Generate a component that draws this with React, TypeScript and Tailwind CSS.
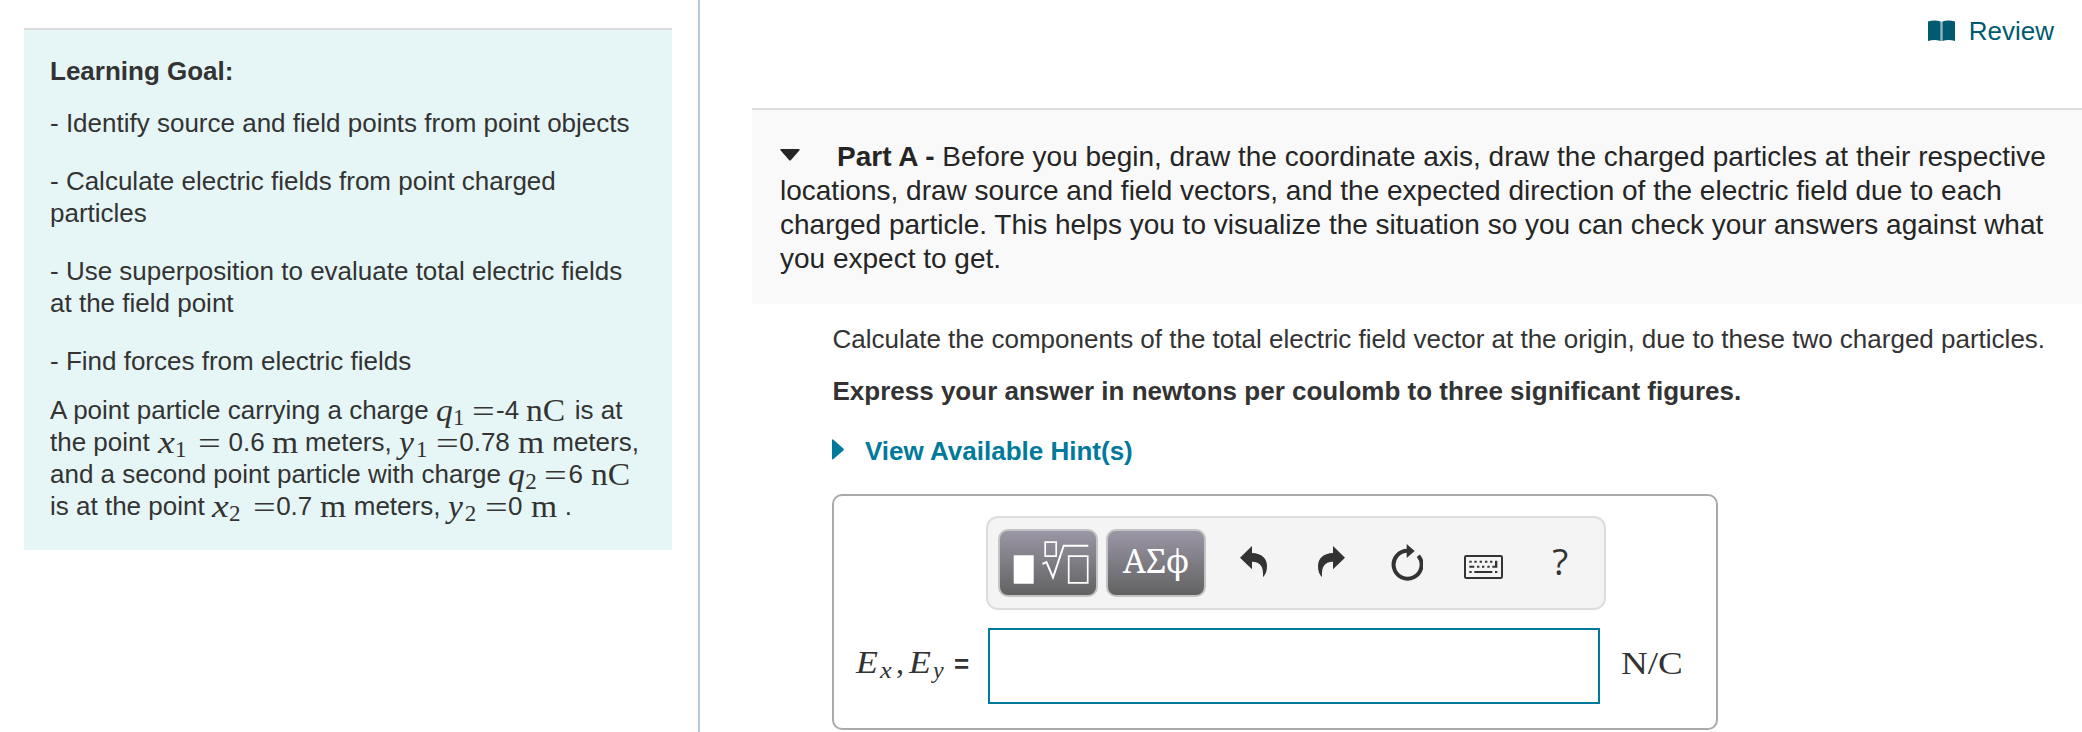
import type { ReactNode } from 'react';
import { clsx } from 'clsx';

const serif = 'font-["Liberation_Serif",serif]';

function Roman({ children, className }: { children: ReactNode; className?: string }) {
  return (
    <span className={clsx('relative top-0.5 inline-block text-[32px] leading-none', serif, className)}>
      <span className="inline-block origin-left scale-x-105">{children}</span>
    </span>
  );
}

function Equals({ className }: { className?: string }) {
  return (
    <span className={clsx('relative top-[3px] inline-block text-[31px] leading-none', serif, className)}>
      <span className="inline-block origin-left scale-x-[1.3]">=</span>
    </span>
  );
}

function Variable({ name, index, className }: { name: string; index: string; className?: string }) {
  return (
    <span className={clsx('inline-flex items-baseline text-[32px] leading-none', serif, className)}>
      <span className="relative top-0.5 w-[17px]">
        <i className={clsx('inline-block origin-left', name === 'x' ? 'scale-x-[1.18]' : 'scale-x-105')}>{name}</i>
      </span>
      <span className="relative top-[6px] text-[23px]">{index}</span>
    </span>
  );
}

function LearningGoal() {
  return (
    <section className="mt-7 ml-6 h-[522px] w-[648px] border-t-2 border-[#ddd] bg-[#e6f6f6] pt-[25px] pl-[26px] text-[26px] leading-8 whitespace-nowrap text-[#333]">
      <h2 className="font-bold">Learning Goal:</h2>
      <p className="mt-5">- Identify source and field points from point objects</p>
      <p className="mt-[26px]">
        - Calculate electric fields from point charged
        <br />
        particles
      </p>
      <p className="mt-[26px]">
        - Use superposition to evaluate total electric fields
        <br />
        at the field point
      </p>
      <p className="mt-[26px]">- Find forces from electric fields</p>
      <div className="mt-[15px]">
        <p className="h-8">
          A point particle carrying a charge <Variable name="q" index="1" className="w-[29px]" />{' '}
          <Equals className="w-[24px]" />
          -4 <Roman className="w-[41px]">nC</Roman> is at
        </p>
        <p className="h-8">
          the point <Variable name="x" index="1" className="ml-px w-[33px]" />{' '}
          <Equals className="w-[23px]" /> 0.6 <Roman className="w-[26px]">m</Roman> meters,{' '}
          <Variable name="y" index="1" className="w-[30px]" /> <Equals className="w-[23px]" />
          0.78 <Roman className="ml-px w-[27px]">m</Roman> meters,
        </p>
        <p className="h-8">
          and a second point particle with charge{' '}
          <Variable name="q" index="2" className="w-[29px]" /> <Equals className="w-[24px]" />
          6 <Roman className="ml-px">nC</Roman>
        </p>
        <p className="h-8">
          is at the point <Variable name="x" index="2" className="w-[34px]" />{' '}
          <Equals className="w-[23px]" />
          0.7 <Roman className="w-[27px]">m</Roman> meters,{' '}
          <Variable name="y" index="2" className="w-[30px]" /> <Equals className="w-[23px]" />
          0 <Roman className="ml-px w-[27px]">m</Roman> .
        </p>
      </div>
    </section>
  );
}

function BookIcon() {
  return (
    <svg width="27" height="22" viewBox="0 0 27 22" fill="#005a70">
      <path d="M0 1.5C4 .2 9 .2 12.5 1.5V21C9 19.6 4 19.6 0 21Z" />
      <path d="M14.5 1.5C18 .2 23 .2 27 1.5V21C23 19.6 18 19.6 14.5 21Z" />
      <path d="M12.5 1.5h2V21h-2z" opacity=".45" />
    </svg>
  );
}

function UndoIcon({ className }: { className?: string }) {
  return (
    <svg width="28" height="32" viewBox="0 0 84 96" fill="#333" className={className}>
      <path d="M0 35 36 0V21C66 22 81 38 81 61C81 75 77 85 69 94C71 62 62 48 36 47V70Z" />
    </svg>
  );
}

function ResetIcon() {
  return (
    <svg width="32" height="37" viewBox="0 0 96 111" fill="none">
      <path d="M52 20A42 42 0 1 0 82 35" stroke="#333" strokeWidth="12" />
      <path d="M47 0 71 21 47 42Z" fill="#333" />
    </svg>
  );
}

function KeyboardIcon() {
  return (
    <svg width="39" height="24" viewBox="0 0 117 72" fill="#333">
      <rect x="3" y="3" width="111" height="66" rx="4" fill="none" stroke="#333" strokeWidth="6" />
      <path d="M16 17h7v6h-7zM31 17h7v6h-7zM47 17h7v6h-7zM63 17h7v6h-7zM78 17h7v6h-7zM93 17h7v21H85v-6h8z" />
      <path d="M16 32h15v6H16zM39 32h7v6h-7zM54 32h7v6h-7zM70 32h7v6h-7z" />
      <path d="M16 48h7v6h-7zM31 48h54v6H31zM93 48h7v6h-7z" />
    </svg>
  );
}

function TemplateIcon() {
  return (
    <svg width="80" height="44" viewBox="0 0 80 44" fill="none" stroke="#fff" className="overflow-visible">
      <path d="M5.700 14.300h20v28.400h-20z" fill="#fff" stroke="none" />
      <path d="M37.200 1.200h11v14h-11zM60.700 15.200h19v26.600h-19z" strokeWidth="1.700" />
      <path d="m34.500 23 4-2L45 36.500 55.700 4.700H80.300" strokeWidth="2" />
    </svg>
  );
}

const paletteButton =
  'flex h-[68px] w-[100px] items-center justify-center rounded-[10px] border-2 border-[#c4c4c4] bg-linear-to-b from-[#9b97a6] to-[#626262]';
const toolButton = 'flex w-[76.500px] items-center justify-center';

function Toolbar() {
  return (
    <div className="flex h-[94px] w-[620px] items-center rounded-xl border-2 border-[#ddd] bg-[#f4f4f4] pl-2.5">
      <button className={paletteButton}>
        <TemplateIcon />
      </button>
      <button className={clsx(paletteButton, 'ml-2 pb-1.5')}>
        <span className='font-["Noto_Serif","DejaVu_Serif",serif] text-[33px] leading-none text-white'>ΑΣϕ</span>
      </button>
      <div className="ml-2.5 flex">
        <button className={clsx(toolButton, 'pb-0.5')}>
          <UndoIcon />
        </button>
        <button className={clsx(toolButton, 'pb-0.5')}>
          <UndoIcon className="-scale-x-100" />
        </button>
        <button className={clsx(toolButton, 'pb-0.5')}>
          <ResetIcon />
        </button>
        <button className={clsx(toolButton, 'pt-2')}>
          <KeyboardIcon />
        </button>
        <button
          className={clsx(toolButton, 'pb-1.5 font-["Open_Sans",sans-serif] text-[37px] leading-none text-[#333]')}
        >
          ?
        </button>
      </div>
    </div>
  );
}

function AnswerBox() {
  return (
    <div className="mt-[27px] ml-20 h-[236px] w-[886px] rounded-[10px] border-2 border-[#aaa] pt-5">
      <div className="pl-[152px]">
        <Toolbar />
      </div>
      <div className="mt-[18px] flex h-[76px] items-center text-[#333]">
        <div className={clsx('flex w-[154px] items-baseline pb-1.5 pl-[22px] text-[32px]', serif)}>
          <i className="w-6 origin-left scale-x-[1.12]">E</i>
          <i className="relative top-[5px] w-[14px] origin-left scale-x-110 text-[24px]">x</i>
          <span className="w-[15px] pl-0.5">,</span>
          <i className="w-6 origin-left scale-x-[1.12]">E</i>
          <i className="relative top-[5px] w-[21px] text-[24px]">y</i>
          <b className="font-['Liberation_Sans',sans-serif] text-[26px]">=</b>
        </div>
        <input className="h-[76px] w-[612px] border-2 border-[#007a9c] bg-white outline-none" />
        <span className={clsx('ml-[21px] origin-left scale-x-[1.16] pb-1.5 text-[32px] leading-none', serif)}>N/C</span>
      </div>
    </div>
  );
}

function PartA() {
  return (
    <main className="flex-1 pl-[52px] whitespace-nowrap">
      <a className="flex h-[62px] items-center justify-end pr-7 text-[26px] text-[#005a70]">
        <BookIcon />
        <span className="ml-3.5">Review</span>
      </a>
      <header className="mt-[46px] h-[196px] border-t-2 border-[#ddd] bg-[#f9f9f9] pt-[30px] pl-7 text-[28px] leading-[34px] text-[#252525]">
        <p>
          <svg width="20" height="12" viewBox="0 0 20 12" className="mr-[37px] mb-[5px] inline-block align-baseline">
            <path d="M1.500 0h17q2 0 .8 1.500L11 11q-1 1-2 0L.7 1.500Q-.5 0 1.500 0Z" fill="#252525" />
          </svg>
          <b>Part A - </b>
          Before you begin, draw the coordinate axis, draw the charged particles at their respective
        </p>
        <p>locations, draw source and field vectors, and the expected direction of the electric field due to each</p>
        <p>charged particle. This helps you to visualize the situation so you can check your answers against what</p>
        <p>you expect to get.</p>
      </header>
      <div className="pt-[19px] text-[26px] leading-8 text-[#333]">
        <p className="ml-[80.500px]">
          Calculate the components of the total electric field vector at the origin, due to these two charged particles.
        </p>
        <p className="mt-5 ml-[80.500px] font-bold">
          Express your answer in newtons per coulomb to three significant figures.
        </p>
        <a className="mt-7 ml-20 flex h-8 items-center font-bold text-[#007a9c]">
          <svg width="12" height="21" viewBox="0 0 12 21" className="mr-[21px] -mt-1">
            <path d="M0 1.500Q0-.5 1.500.8L11.300 9.500q1 1 0 2L1.500 20Q0 21 0 19.500Z" fill="#007a9c" />
          </svg>
          View Available Hint(s)
        </a>
        <AnswerBox />
      </div>
    </main>
  );
}

export default function App() {
  return (
    <div className='flex h-[732px] w-[2082px] overflow-hidden bg-white font-["Liberation_Sans",sans-serif]'>
      <aside className="w-[700px] border-r-2 border-[#b5c9db]">
        <LearningGoal />
      </aside>
      <PartA />
    </div>
  );
}
